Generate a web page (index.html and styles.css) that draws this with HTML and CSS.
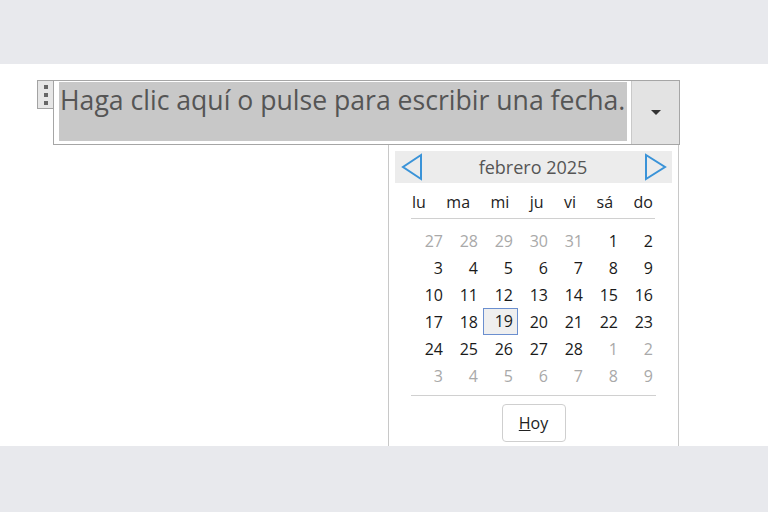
FILE: index.html
```html
<!DOCTYPE html>
<html lang="es">
<head>
    <meta charset="UTF-8">
    <title>Selector de fecha</title>
    <link rel="stylesheet" href="styles.css">
</head>
<body>

    <div class="band"></div>

    <div class="sheet">
        <!-- Control de contenido de fecha -->
        <div class="control">
            <span class="grip"><i></i><i></i><i></i></span>
            <div class="field">
                <div class="fill">Haga clic aquí o pulse para escribir una fecha.</div>
            </div>
            <div class="drop"><span class="caret"></span></div>
        </div>

        <!-- Calendario desplegable -->
        <div class="calendar">
            <div class="cal-head">
                <svg class="nav nav-prev" width="22" height="28" viewBox="0 0 22 28">
                    <polygon points="20,2 20,26 2,14" fill="none" stroke="#3a93d8" stroke-width="2" stroke-linejoin="miter"/>
                </svg>
                <span class="month">febrero 2025</span>
                <svg class="nav nav-next" width="24" height="28" viewBox="0 0 24 28">
                    <polygon points="3,2 3,26 22,14" fill="none" stroke="#3a93d8" stroke-width="2" stroke-linejoin="miter"/>
                </svg>
            </div>

            <div class="weekdays">
                <span>lu</span><span>ma</span><span>mi</span><span>ju</span><span>vi</span><span>sá</span><span>do</span>
            </div>

            <div class="days">
                <span class="muted">27</span><span class="muted">28</span><span class="muted">29</span><span class="muted">30</span><span class="muted">31</span><span>1</span><span>2</span>
                <span>3</span><span>4</span><span>5</span><span>6</span><span>7</span><span>8</span><span>9</span>
                <span>10</span><span>11</span><span>12</span><span>13</span><span>14</span><span>15</span><span>16</span>
                <span>17</span><span>18</span><span class="today">19</span><span>20</span><span>21</span><span>22</span><span>23</span>
                <span>24</span><span>25</span><span>26</span><span>27</span><span>28</span><span class="muted">1</span><span class="muted">2</span>
                <span class="muted">3</span><span class="muted">4</span><span class="muted">5</span><span class="muted">6</span><span class="muted">7</span><span class="muted">8</span><span class="muted">9</span>
            </div>

            <div class="cal-foot">
                <button class="btn-today"><u>H</u>oy</button>
            </div>
        </div>
    </div>

</body>
</html>
```

FILE: styles.css
```css
/* Reset básico */
* {
    margin: 0;
    padding: 0;
    box-sizing: border-box;
}

body {
    background-color: #e8e9ed;
    font-family: 'Open Sans', sans-serif;
    color: #1a1a1a;
}

.band {
    height: 64px;
}

/* Hoja blanca */
.sheet {
    height: 382px;
    background-color: #fff;
    padding: 16px 0 0 53px;
    overflow: hidden;
}

/* Control de fecha */
.control {
    position: relative;
    display: flex;
    width: 627px;
    height: 65px;
    border: 1px solid #a6a6a6;
}

.grip {
    position: absolute;
    left: -17px;
    top: -1px;
    width: 17px;
    height: 29px;
    border: 1px solid #a3a3a3;
    background-color: #e6e6e6;
    display: flex;
    flex-direction: column;
    align-items: center;
    justify-content: center;
    gap: 4px;
}

.grip i {
    display: block;
    width: 4px;
    height: 4px;
    background-color: #666;
}

.field {
    flex: 1;
    padding: 1px 4px 3px 5px;
}

.fill {
    height: 100%;
    background-color: #c8c8c8;
    color: #555;
    font-size: 26.6px;
    font-weight: 500;
    padding-left: 1px;
    white-space: nowrap;
    overflow: hidden;
}

.drop {
    width: 48px;
    background-color: #e3e3e3;
    border-left: 1px solid #c9c9c9;
    display: flex;
    justify-content: center;
    padding-top: 29px;
}

.caret {
    width: 0;
    height: 0;
    border-left: 5px solid transparent;
    border-right: 5px solid transparent;
    border-top: 5px solid #333;
}

/* Calendario */
.calendar {
    width: 291px;
    height: 320px;
    margin-left: 335px;
    border: 1px solid #c8c8c8;
    border-top: none;
    padding: 6px 6px 0;
}

.cal-head {
    height: 32px;
    background-color: #ececec;
    display: flex;
    align-items: center;
    justify-content: space-between;
    padding: 0 5px 0 6px;
}

.nav {
    display: block;
}

.month {
    font-size: 18px;
    color: #555;
}

.weekdays {
    display: flex;
    justify-content: space-between;
    height: 36px;
    line-height: 38px;
    margin: 0 17px 0 16px;
    padding: 0 2px 0 1px;
    border-bottom: 1px solid #d0d0d0;
    font-size: 16px;
    color: #222;
}

.days {
    display: grid;
    grid-template-columns: repeat(7, 35px);
    grid-auto-rows: 27px;
    margin: 9px 16px 0;
    font-size: 16px;
}

.days span {
    text-align: right;
    padding-right: 2px;
    line-height: 25px;
    border: 1px solid transparent;
}

.days .muted {
    color: #a9a9a9;
}

.days .today {
    border-color: #6b8fcf;
    background-color: #efefef;
    padding-right: 4px;
    margin: -1px -2px 1px 2px;
}

.cal-foot {
    margin: 5px 16px 0;
    border-top: 1px solid #d0d0d0;
    padding-top: 8px;
    display: flex;
    justify-content: center;
}

.btn-today {
    width: 64px;
    height: 38px;
    background-color: #fff;
    border: 1px solid #cfcfcf;
    border-radius: 4px;
    font-family: 'Open Sans', sans-serif;
    font-size: 16px;
    color: #222;
}
```
